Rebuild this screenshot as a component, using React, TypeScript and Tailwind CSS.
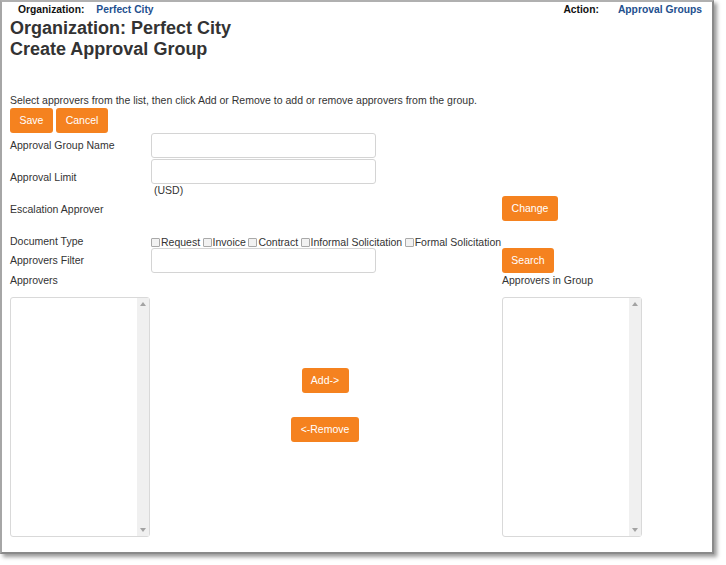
import React from "react";

const Btn = ({ children, w }: { children: React.ReactNode; w: string }) => (
  <div
    className={`${w} h-[25px] flex items-center justify-center rounded-[3px] bg-[#f5821f] text-white text-[10.5px] leading-none`}
  >
    {children}
  </div>
);

const Input = () => (
  <div className="w-[225px] h-[25px] rounded-[3px] border border-[#d4d4d4] bg-white" />
);

const Cb = ({ label }: { label: string }) => (
  <span className="inline-flex items-center mr-[2.5px]">
    <span className="w-[9px] h-[9px] border border-[#a9a9a9] bg-[#f2f2f2] rounded-[1px] mr-[1px]" />
    <span>{label}</span>
  </span>
);

const ListBox = () => (
  <div className="w-[140px] h-[240px] rounded-[3px] border border-[#d9d9d9] bg-white flex justify-end">
    <div className="w-[12px] h-full bg-[#f0f0f0] flex flex-col items-center justify-between py-[4px]">
      <svg width="6" height="4" viewBox="0 0 6 4">
        <polygon points="3,0 6,4 0,4" fill="#a3a3a3" />
      </svg>
      <svg width="6" height="4" viewBox="0 0 6 4">
        <polygon points="0,0 6,0 3,4" fill="#a3a3a3" />
      </svg>
    </div>
  </div>
);

export default function App() {
  return (
    <div className="w-[726px] h-[565px] bg-white font-['Liberation_Sans',Arial,sans-serif] text-[#333]">
      <div className="w-[714px] h-[554px] border-2 border-l-[#a6a6a6] border-t-[#b0b0b0] border-r-[#8a8a8a] border-b-[#8a8a8a] shadow-[3px_3px_4px_rgba(0,0,0,0.4)] bg-white pl-[8px] flex flex-col">
        <div className="h-[15px] flex items-center justify-between pr-[10px] text-[10.3px] font-bold">
          <div className="flex items-center ml-[8px] gap-[12px]">
            <span className="text-[#111]">Organization:</span>
            <span className="text-[#23508f]">Perfect City</span>
          </div>
          <div className="flex items-center gap-[19px]">
            <span className="text-[#111]">Action:</span>
            <span className="text-[#23508f]">Approval Groups</span>
          </div>
        </div>
        <div className="mt-[1px] text-[18px] leading-[21px] font-bold text-[#333]">
          <div>Organization: Perfect City</div>
          <div>Create Approval Group</div>
        </div>
        <div className="mt-[34px] text-[10.5px] leading-[13px]">
          Select approvers from the list, then click Add or Remove to add or remove approvers from the group.
        </div>
        <div className="mt-[1px] flex gap-[3px]">
          <Btn w="w-[43px]">Save</Btn>
          <Btn w="w-[52px]">Cancel</Btn>
        </div>
        <div className="grid grid-cols-[141px_351px_1fr] text-[10.5px] leading-[13px]">
          {/* row 1 */}
          <div className="h-[25px] flex items-center">Approval Group Name</div>
          <div className="h-[25px]">
            <Input />
          </div>
          <div />
          {/* row 2 */}
          <div className="mt-[1px] h-[37px] flex items-center">Approval Limit</div>
          <div className="mt-[1px] h-[37px] flex flex-col">
            <Input />
            <div className="ml-[3px] leading-[12px]">(USD)</div>
          </div>
          <div />
          {/* row 3 */}
          <div className="h-[26px] flex items-center">Escalation Approver</div>
          <div />
          <div className="h-[26px] flex items-start">
            <Btn w="w-[56px]">Change</Btn>
          </div>
          {/* row 4 */}
          <div className="mt-[13px] h-[13px] flex items-center">Document Type</div>
          <div className="mt-[13px] h-[13px] flex items-center whitespace-nowrap translate-y-[1px]">
            <Cb label="Request" />
            <Cb label="Invoice" />
            <Cb label="Contract" />
            <Cb label="Informal Solicitation" />
            <Cb label="Formal Solicitation" />
          </div>
          <div className="mt-[13px]" />
          {/* row 5 */}
          <div className="h-[25px] flex items-center">Approvers Filter</div>
          <div className="h-[25px]">
            <Input />
          </div>
          <div className="h-[25px]">
            <Btn w="w-[52px]">Search</Btn>
          </div>
          {/* row 6 */}
          <div className="h-[14px] flex items-center">Approvers</div>
          <div />
          <div className="h-[14px] flex items-center">Approvers in Group</div>
          {/* lists */}
          <div className="mt-[10px]">
            <ListBox />
          </div>
          <div className="mt-[10px] pt-[71px] flex flex-col items-center gap-[24px] pr-[3px]">
            <Btn w="w-[47px]">Add-&gt;</Btn>
            <Btn w="w-[68px]">&lt;-Remove</Btn>
          </div>
          <div className="mt-[10px]">
            <ListBox />
          </div>
        </div>
      </div>
    </div>
  );
}
